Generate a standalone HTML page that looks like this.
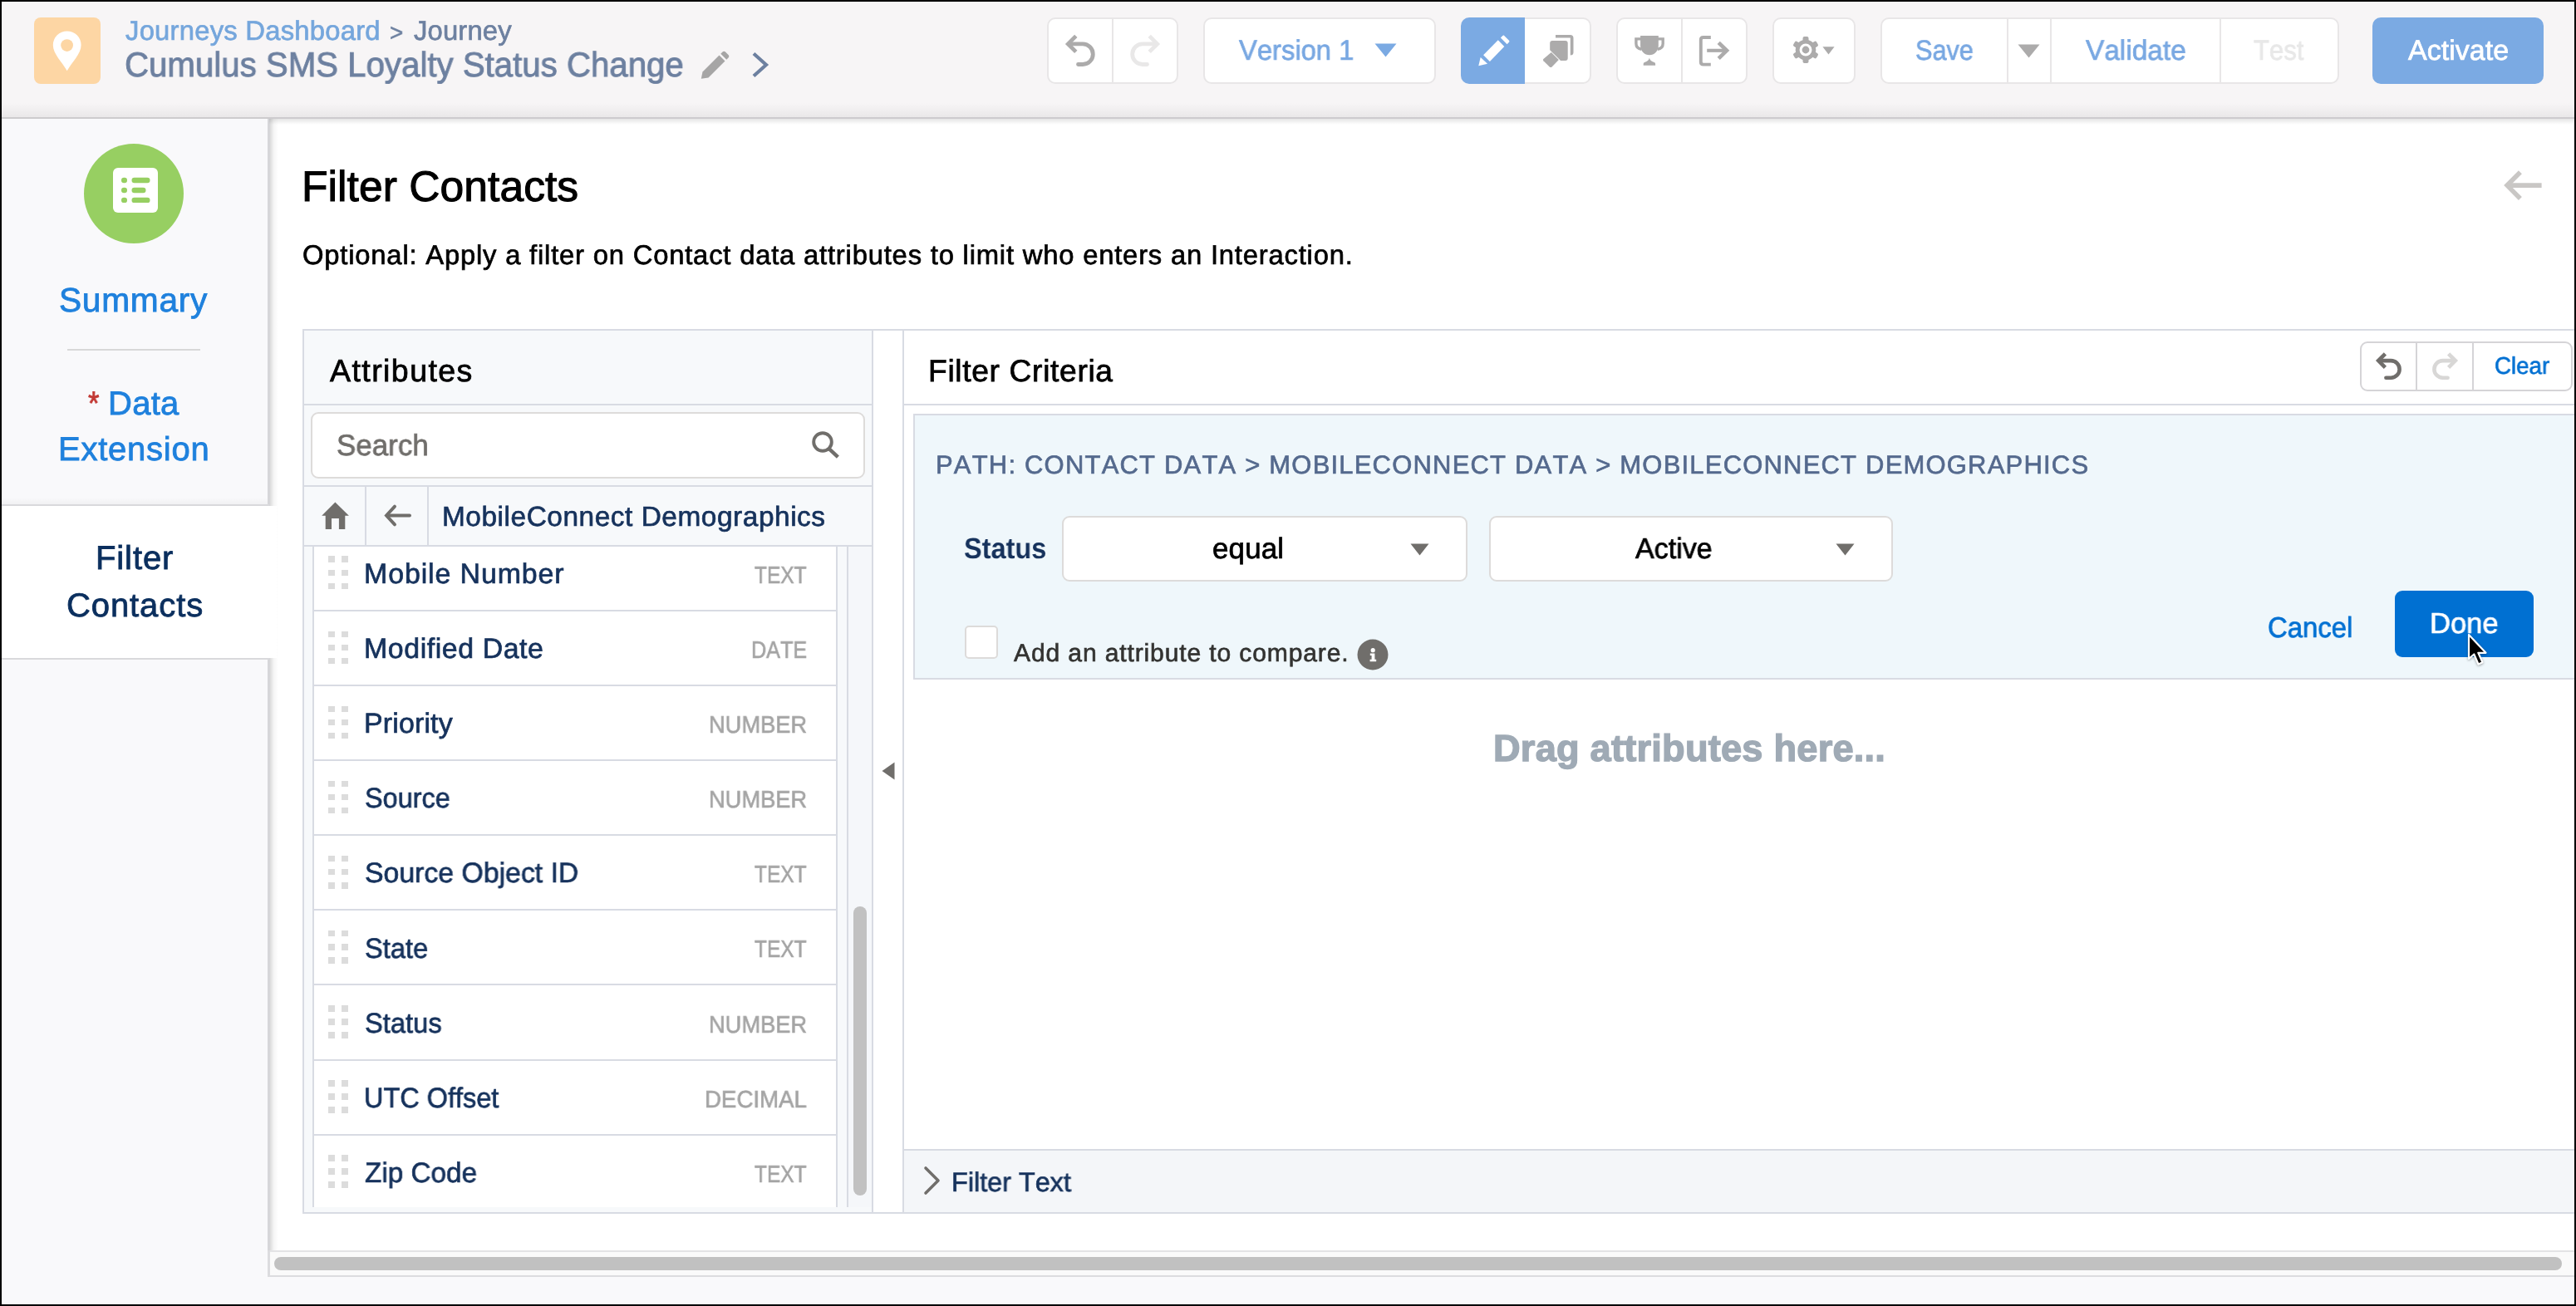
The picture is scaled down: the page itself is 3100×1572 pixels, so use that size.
<!DOCTYPE html>
<html><head><meta charset="utf-8"><title>Journey Builder - Filter Contacts</title>
<style>
html,body{margin:0;padding:0;}
body{width:3100px;height:1572px;overflow:hidden;background:#000;font-family:"Liberation Sans",sans-serif;position:relative;}
#app{position:absolute;left:0;top:0;width:3100px;height:1572px;overflow:hidden;}
.b{position:absolute;box-sizing:border-box;display:block;}
.t{position:absolute;white-space:nowrap;line-height:0;will-change:transform;font-kerning:none;text-rendering:geometricPrecision;}
.t i{display:inline-block;width:0;height:100px;}
</style></head><body><div id="app">
<div class="b" style="left:2px;top:2px;width:3096px;height:1568px;background:#fff;"></div>
<div class="b" style="left:2px;top:143px;width:320px;height:1427px;background:#f9f9fb;"></div>
<div class="b" style="left:322px;top:143px;width:2.5px;height:1363px;background:#d6d6d9;"></div>
<div class="b" style="left:324.5px;top:143px;width:10.5px;height:1363px;background:linear-gradient(to right,rgba(0,0,0,0.14),rgba(0,0,0,0.04) 45%,rgba(0,0,0,0));"></div>
<div class="b" style="left:322px;top:1536px;width:2776px;height:34px;background:#f9f9fb;"></div>
<div class="b" style="left:324px;top:1505px;width:2774px;height:32px;background:#fafafa;border-top:2px solid #e3e3e5;border-bottom:2px solid #dcdcdf;"></div>
<div class="b" style="left:322px;top:1505px;width:2.5px;height:32px;background:#dcdcdf;"></div>
<div class="b" style="left:330px;top:1513px;width:2753px;height:16px;background:#c1c1c1;border-radius:8px;"></div>
<div class="b" style="left:101px;top:173px;width:120px;height:120px;background:#97cf62;border-radius:50%;"></div>
<svg class="b" style="left:136px;top:201.5px;" width="54" height="54" viewBox="0 0 54 54"><rect x="0" y="0" width="54" height="54" rx="6" fill="#fff"/><g fill="#97cf62"><rect x="10" y="11.800" width="7" height="6.400" rx="3.200"/><rect x="22.500" y="11.800" width="22" height="6.400" rx="3.200"/><rect x="10" y="23.800" width="7" height="6.400" rx="3.200"/><rect x="22.500" y="23.800" width="17" height="6.400" rx="3.200"/><rect x="10" y="35.700" width="7" height="6.400" rx="3.200"/><rect x="22.500" y="35.700" width="22" height="6.400" rx="3.200"/></g></svg>
<div class="t" style="left:71.0px;top:274.8px;font-size:40.7px;color:#1f81dd;letter-spacing:0.71px;-webkit-text-stroke:0.85px #1f81dd;"><i></i>Summary</div>
<div class="b" style="left:81px;top:420px;width:160px;height:2px;background:#d8d8d8;"></div>
<div class="t" style="left:105.5px;top:399.0px;font-size:40px;color:#c23934;-webkit-text-stroke:0.84px #c23934;transform:scaleX(0.8654);transform-origin:left center;"><i></i>*</div>
<div class="t" style="left:130.3px;top:399.0px;font-size:40.0px;color:#1f81dd;letter-spacing:0.25px;-webkit-text-stroke:0.84px #1f81dd;"><i></i>Data</div>
<div class="t" style="left:70.0px;top:454.2px;font-size:40.0px;color:#1f81dd;letter-spacing:0.76px;-webkit-text-stroke:0.84px #1f81dd;"><i></i>Extension</div>
<div class="b" style="left:2px;top:609px;width:331px;height:183px;background:#fff;"></div>
<div class="b" style="left:324px;top:609px;width:12px;height:183px;background:linear-gradient(to right,#fff 60%,rgba(255,255,255,0));"></div>
<div class="b" style="left:2px;top:599px;width:320px;height:8px;background:linear-gradient(to bottom,rgba(0,0,0,0),rgba(0,0,0,0.035));"></div>
<div class="b" style="left:2px;top:607px;width:322px;height:2px;background:#d9d9dc;"></div>
<div class="b" style="left:2px;top:792px;width:322px;height:2px;background:#d9d9dc;"></div>
<div class="t" style="left:115.1px;top:585.0px;font-size:40.0px;color:#0b2f5e;letter-spacing:0.90px;-webkit-text-stroke:0.84px #0b2f5e;"><i></i>Filter</div>
<div class="t" style="left:80.4px;top:641.6px;font-size:40.0px;color:#0b2f5e;letter-spacing:0.90px;-webkit-text-stroke:0.84px #0b2f5e;"><i></i>Contacts</div>
<div class="b" style="left:2px;top:2px;width:3096px;height:139px;background:linear-gradient(to bottom,#f7f5f6 0,#f7f5f6 122px,#eae8e9 139px);"></div>
<div class="b" style="left:2px;top:141px;width:3096px;height:2px;background:#cdcbce;"></div>
<div class="b" style="left:324px;top:143px;width:2774px;height:7px;background:linear-gradient(to bottom,rgba(0,0,0,0.10),rgba(0,0,0,0));"></div>
<div class="b" style="left:41px;top:21px;width:80px;height:80px;background:#fdd6a4;border-radius:8px;"></div>
<svg class="b" style="left:63px;top:37px;" width="36" height="49" viewBox="0 0 36 49"><path d="M17.700 48.300C12 38 0.800 28 0.800 17.300A16.900 16.900 0 0 1 34.600 17.300C34.600 28 23.400 38 17.700 48.300z" fill="#fff"/><circle cx="17.600" cy="17.600" r="7.400" fill="#fdd6a4"/></svg>
<div class="t" style="left:151.2px;top:-52.5px;font-size:32.8px;color:#75a6dc;letter-spacing:0.23px;-webkit-text-stroke:0.69px #75a6dc;"><i></i>Journeys Dashboard</div>
<div class="t" style="left:468.9px;top:-50.7px;font-size:29px;color:#6d80a0;-webkit-text-stroke:0.61px #6d80a0;transform:scaleX(0.9525);transform-origin:left center;"><i></i>&gt;</div>
<div class="t" style="left:497.6px;top:-52.5px;font-size:32.8px;color:#6d80a0;letter-spacing:0.15px;-webkit-text-stroke:0.69px #6d80a0;"><i></i>Journey</div>
<div class="t" style="left:150.0px;top:-8.4px;font-size:41.7px;color:#6d80a0;-webkit-text-stroke:0.88px #6d80a0;transform:scaleX(0.9646);transform-origin:left center;"><i></i>Cumulus SMS Loyalty Status Change</div>
<svg class="b" style="left:843px;top:61px;" width="35" height="34" viewBox="0 0 35 34"><g fill="#a6a5a5"><path d="M22.500 5.500l7 7L9.500 32.500 0.800 33.700 2.500 25.500z"/><path d="M24.300 3.700l2.200-2.200c1-1 2.500-1 3.500 0l3.500 3.500c1 1 1 2.500 0 3.500l-2.200 2.200z"/></g></svg>
<svg class="b" style="left:903px;top:61px;" width="24" height="34" viewBox="0 0 24 34"><path d="M4 3.500L19 17 4 30.500" fill="none" stroke="#6d80a0" stroke-width="4.200" stroke-linecap="butt" stroke-linejoin="miter"/></svg>
<div class="b" style="left:1260px;top:21px;width:158px;height:80px;background:#fff;border:2px solid #e8e6e7;border-radius:10px;"></div>
<div class="b" style="left:1338px;top:23px;width:2px;height:76px;background:#e8e6e7;"></div>
<svg class="b" style="left:1280px;top:40px;" width="40" height="42" viewBox="0 0 40 42"><g fill="none" stroke="#acabab" stroke-width="4.8" stroke-linejoin="miter"><path d="M14.8 3.4L5.3 12.9L14.8 22.4" stroke-linecap="butt"/><path d="M6.3 12.9H23.0a12.3 12.3 0 0 1 0 24.6H17.5" stroke-linecap="round"/></g></svg>
<svg class="b" style="left:1357.7px;top:40px;transform:scaleX(-1);" width="40" height="42" viewBox="0 0 40 42"><g fill="none" stroke="#e9e8e8" stroke-width="4.8" stroke-linejoin="miter"><path d="M14.8 3.4L5.3 12.9L14.8 22.4" stroke-linecap="butt"/><path d="M6.3 12.9H23.0a12.3 12.3 0 0 1 0 24.6H17.5" stroke-linecap="round"/></g></svg>
<div class="b" style="left:1448px;top:21px;width:280px;height:80px;background:#fff;border:2px solid #e8e6e7;border-radius:10px;"></div>
<div class="t" style="left:1490.5px;top:-28.0px;font-size:34.0px;color:#79a8e2;-webkit-text-stroke:0.71px #79a8e2;transform:scaleX(0.9632);transform-origin:left center;"><i></i>Version 1</div>
<svg class="b" style="left:1654px;top:52px;" width="27" height="17" viewBox="0 0 27 17"><path d="M0.500 0.500h26L13.500 16.500z" fill="#7baae3"/></svg>
<div class="b" style="left:1758px;top:21px;width:77px;height:80px;background:#7baae3;border-radius:10px 0 0 10px;"></div>
<div class="b" style="left:1835px;top:21px;width:80px;height:80px;background:#fff;border:2px solid #e8e6e7;border-left:none;border-radius:0 10px 10px 0;"></div>
<svg class="b" style="left:1775px;top:38px;" width="46" height="46" viewBox="0 0 46 46"><g fill="#fff"><polygon points="27.8,10.3 35.3,18.0 17.9,35.9 10.1,28.3"/><polygon points="6.7,31.1 15.1,38.8 4.3,41.2"/><path d="M34.7 4.6l6.3 6.2q1 1 0 2l-2.400 2.400l-7.700-7.700l2.400-2.400q0.700-0.700 1.400-0.500z"/></g></svg>
<svg class="b" style="left:1855px;top:40px;" width="42" height="44" viewBox="0 0 42 44"><g fill="#acabab"><path d="M17 2h17.5q4 0 4 4v17q0 3.600-3.700 3.600v-21h-17.8z"/><path d="M13.2 8.9h15.5q3 0 3 3v18.2q0 3-3 3h-5.6L10.2 20.2v-8.3q0-3 3-3z"/><path d="M11.8 22.9L20.8 31.9L12.6 40.6q-1.400 1-2.800 0L2.4 33.2q-1-1.200 0-2.200z"/></g></svg>
<div class="b" style="left:1945px;top:21px;width:158px;height:80px;background:#fff;border:2px solid #e8e6e7;border-radius:10px;"></div>
<div class="b" style="left:2023px;top:23px;width:2px;height:76px;background:#e8e6e7;"></div>
<svg class="b" style="left:1965px;top:41px;" width="42" height="40" viewBox="0 0 42 40"><g fill="#acabab"><path d="M9.1 2h21.7v12a10.85 11.3 0 0 1 -21.7 0z"/><path d="M2.2 4.2h8v3.4h-4.6v4q0 4 4.600 5v3.500q-8-1-8-8.500z"/><path d="M37.9 4.2h-8v3.4h4.6v4q0 4-4.600 5v3.500q8-1 8-8.500z"/><path d="M19.9 28.8q1.300 4.200 5.200 4.900q2 0.300 2 2v2h-14.4v-2q0-1.700 2-2q3.900-0.700 5.200-4.900z"/></g></svg>
<svg class="b" style="left:2042px;top:41px;" width="42" height="40" viewBox="0 0 42 40"><g fill="none" stroke="#acabab" stroke-linejoin="miter"><path d="M16.8 4H7.8q-3 0-3 3V33.6q0 3 3 3H16.8" stroke-width="3.900" stroke-linejoin="round"/><path d="M12.2 19.8H35" stroke-width="4.100"/><path d="M26.2 10.3L36.0 19.8L26.2 29.3" stroke-width="4.600"/></g></svg>
<div class="b" style="left:2133px;top:21px;width:100px;height:80px;background:#fff;border:2px solid #e8e6e7;border-radius:10px;"></div>
<svg class="b" style="left:2152.5px;top:40.4px;" width="40" height="40" viewBox="0 0 40 40"><g fill="#acabab"><rect x="16.5" y="3.8999999999999986" width="7" height="10" rx="2" transform="rotate(0 20 20)"/><rect x="16.5" y="3.8999999999999986" width="7" height="10" rx="2" transform="rotate(60 20 20)"/><rect x="16.5" y="3.8999999999999986" width="7" height="10" rx="2" transform="rotate(120 20 20)"/><rect x="16.5" y="3.8999999999999986" width="7" height="10" rx="2" transform="rotate(180 20 20)"/><rect x="16.5" y="3.8999999999999986" width="7" height="10" rx="2" transform="rotate(240 20 20)"/><rect x="16.5" y="3.8999999999999986" width="7" height="10" rx="2" transform="rotate(300 20 20)"/><circle cx="20" cy="20" r="12.300"/></g><circle cx="20" cy="20" r="7.450" fill="#fff"/><circle cx="20" cy="20" r="4.400" fill="#acabab"/></svg>
<svg class="b" style="left:2192.5px;top:56.3px;" width="15" height="10" viewBox="0 0 15 10"><path d="M0.400 0.300h14.200L7.500 9.500z" fill="#acabab"/></svg>
<div class="b" style="left:2263px;top:21px;width:552px;height:80px;background:#fff;border:2px solid #e8e6e7;border-radius:10px;"></div>
<div class="b" style="left:2415px;top:23px;width:2px;height:76px;background:#e8e6e7;"></div>
<div class="b" style="left:2467px;top:23px;width:2px;height:76px;background:#e8e6e7;"></div>
<div class="b" style="left:2671px;top:23px;width:2px;height:76px;background:#e8e6e7;"></div>
<div class="t" style="left:2304.7px;top:-28.2px;font-size:34.0px;color:#79a8e2;-webkit-text-stroke:0.71px #79a8e2;transform:scaleX(0.9021);transform-origin:left center;"><i></i>Save</div>
<svg class="b" style="left:2428px;top:52.5px;" width="27" height="17" viewBox="0 0 27 17"><path d="M0.500 0.500h26L13.500 16.500z" fill="#acabab"/></svg>
<div class="t" style="left:2510.0px;top:-28.2px;font-size:34.0px;color:#79a8e2;-webkit-text-stroke:0.71px #79a8e2;transform:scaleX(0.9826);transform-origin:left center;"><i></i>Validate</div>
<div class="t" style="left:2712.1px;top:-28.2px;font-size:34.0px;color:#e8e8e8;-webkit-text-stroke:0.71px #e8e8e8;transform:scaleX(0.9130);transform-origin:left center;"><i></i>Test</div>
<div class="b" style="left:2855px;top:21px;width:206px;height:80px;background:#7baae3;border-radius:10px;"></div>
<div class="t" style="left:2898.1px;top:-28.2px;font-size:34.0px;color:#fff;letter-spacing:0.02px;-webkit-text-stroke:0.71px #fff;"><i></i>Activate</div>
<div class="t" style="left:363.1px;top:141.8px;font-size:51.6px;color:#000;letter-spacing:0.04px;-webkit-text-stroke:1.08px #000;"><i></i>Filter Contacts</div>
<div class="t" style="left:363.5px;top:217.6px;font-size:32.8px;color:#000;letter-spacing:0.79px;-webkit-text-stroke:0.69px #000;"><i></i>Optional: Apply a filter on Contact data attributes to limit who enters an Interaction.</div>
<svg class="b" style="left:3010px;top:202px;" width="52" height="42" viewBox="0 0 52 42"><g fill="none" stroke="#c9c7c5" stroke-width="5.600" stroke-linecap="butt" stroke-linejoin="miter"><path d="M9 21.100H48.600"/><path d="M22.900 5.200L7.100 21.100L22.900 37"/></g></svg>
<div class="b" style="left:364px;top:396px;width:2746px;height:1065px;background:#fff;border:2px solid #d8dbe3;"></div>
<div class="b" style="left:366px;top:398px;width:683px;height:1061px;background:#f7f9fb;"></div>
<div class="b" style="left:1049px;top:398px;width:2px;height:1061px;background:#d8dbe3;"></div>
<div class="t" style="left:396.6px;top:358.6px;font-size:37.5px;color:#000;letter-spacing:1.44px;-webkit-text-stroke:0.79px #000;"><i></i>Attributes</div>
<div class="b" style="left:366px;top:486px;width:683px;height:2px;background:#d8dbe3;"></div>
<div class="b" style="left:374px;top:496px;width:667px;height:80px;background:#fff;border:2px solid #dddbda;border-radius:9px;"></div>
<div class="t" style="left:405.4px;top:448.2px;font-size:35.6px;color:#706e6b;-webkit-text-stroke:0.75px #706e6b;transform:scaleX(0.9816);transform-origin:left center;"><i></i>Search</div>
<svg class="b" style="left:974px;top:516px;" width="40" height="40" viewBox="0 0 40 40"><circle cx="16" cy="16" r="10.800" fill="none" stroke="#706e6b" stroke-width="3.900"/><path d="M24.200 24.600L34.400 34.100" stroke="#706e6b" stroke-width="4.400" stroke-linecap="butt"/></svg>
<div class="b" style="left:366px;top:584px;width:683px;height:2px;background:#d8dbe3;"></div>
<div class="b" style="left:366px;top:656px;width:683px;height:2px;background:#d8dbe3;"></div>
<div class="b" style="left:439px;top:586px;width:2px;height:70px;background:#d8dbe3;"></div>
<div class="b" style="left:514px;top:586px;width:2px;height:70px;background:#d8dbe3;"></div>
<svg class="b" style="left:385px;top:602px;" width="38" height="38" viewBox="0 0 38 38"><path d="M18.4 2.4L34.9 18.8H30.3V34.9H22.9V22.1H14V34.9H6.7V18.8H2.2z" fill="#706e6b"/></svg>
<svg class="b" style="left:458px;top:604px;" width="40" height="34" viewBox="0 0 40 34"><g fill="none" stroke="#706e6b" stroke-width="3.900" stroke-linecap="round" stroke-linejoin="miter"><path d="M8 16.5H35"/><path d="M17 5.6L7 16.5L17 27.4"/></g></svg>
<div class="t" style="left:532.3px;top:532.7px;font-size:33.4px;color:#16325c;letter-spacing:0.55px;-webkit-text-stroke:0.70px #16325c;"><i></i>MobileConnect Demographics</div>
<div class="b" style="left:376px;top:658px;width:632px;height:795px;background:#fff;border-left:2px solid #d8dbe3;border-right:2px solid #d8dbe3;"></div>
<div class="b" style="left:1019px;top:658px;width:2px;height:795px;background:#d8dbe3;"></div>
<div class="b" style="left:1021px;top:658px;width:28px;height:795px;background:#f5f7fa;"></div>
<div class="b" style="left:378px;top:734px;width:628px;height:2px;background:#d8dbe3;"></div>
<div class="b" style="left:395.4px;top:669.4px;width:7.800000000000011px;height:7.5px;background:#dcdcdc;"></div>
<div class="b" style="left:411.4px;top:669.4px;width:7.800000000000011px;height:7.5px;background:#dcdcdc;"></div>
<div class="b" style="left:395.4px;top:685.5px;width:7.800000000000011px;height:7.5px;background:#dcdcdc;"></div>
<div class="b" style="left:411.4px;top:685.5px;width:7.800000000000011px;height:7.5px;background:#dcdcdc;"></div>
<div class="b" style="left:395.4px;top:701.6px;width:7.800000000000011px;height:7.5px;background:#dcdcdc;"></div>
<div class="b" style="left:411.4px;top:701.6px;width:7.800000000000011px;height:7.5px;background:#dcdcdc;"></div>
<div class="t" style="left:437.6px;top:602.0px;font-size:33.9px;color:#16325c;letter-spacing:0.90px;-webkit-text-stroke:0.71px #16325c;"><i></i>Mobile Number</div>
<div class="t" style="left:908.4px;top:601.9px;font-size:28.9px;color:#a4a4a4;-webkit-text-stroke:0.61px #a4a4a4;transform:scaleX(0.8462);transform-origin:left center;"><i></i>TEXT</div>
<div class="b" style="left:378px;top:824px;width:628px;height:2px;background:#d8dbe3;"></div>
<div class="b" style="left:395.4px;top:759.5px;width:7.800000000000011px;height:7.5px;background:#dcdcdc;"></div>
<div class="b" style="left:411.4px;top:759.5px;width:7.800000000000011px;height:7.5px;background:#dcdcdc;"></div>
<div class="b" style="left:395.4px;top:775.6px;width:7.800000000000011px;height:7.5px;background:#dcdcdc;"></div>
<div class="b" style="left:411.4px;top:775.6px;width:7.800000000000011px;height:7.5px;background:#dcdcdc;"></div>
<div class="b" style="left:395.4px;top:791.7px;width:7.800000000000011px;height:7.5px;background:#dcdcdc;"></div>
<div class="b" style="left:411.4px;top:791.7px;width:7.800000000000011px;height:7.5px;background:#dcdcdc;"></div>
<div class="t" style="left:437.6px;top:692.1px;font-size:33.9px;color:#16325c;letter-spacing:0.57px;-webkit-text-stroke:0.71px #16325c;"><i></i>Modified Date</div>
<div class="t" style="left:904.2px;top:692.0px;font-size:28.9px;color:#a4a4a4;-webkit-text-stroke:0.61px #a4a4a4;transform:scaleX(0.8721);transform-origin:left center;"><i></i>DATE</div>
<div class="b" style="left:378px;top:914px;width:628px;height:2px;background:#d8dbe3;"></div>
<div class="b" style="left:395.4px;top:849.6px;width:7.800000000000011px;height:7.5px;background:#dcdcdc;"></div>
<div class="b" style="left:411.4px;top:849.6px;width:7.800000000000011px;height:7.5px;background:#dcdcdc;"></div>
<div class="b" style="left:395.4px;top:865.7px;width:7.800000000000011px;height:7.5px;background:#dcdcdc;"></div>
<div class="b" style="left:411.4px;top:865.7px;width:7.800000000000011px;height:7.5px;background:#dcdcdc;"></div>
<div class="b" style="left:395.4px;top:881.8px;width:7.800000000000011px;height:7.5px;background:#dcdcdc;"></div>
<div class="b" style="left:411.4px;top:881.8px;width:7.800000000000011px;height:7.5px;background:#dcdcdc;"></div>
<div class="t" style="left:437.6px;top:782.2px;font-size:33.9px;color:#16325c;letter-spacing:0.17px;-webkit-text-stroke:0.71px #16325c;"><i></i>Priority</div>
<div class="t" style="left:853.3px;top:782.1px;font-size:28.9px;color:#a4a4a4;-webkit-text-stroke:0.61px #a4a4a4;transform:scaleX(0.9440);transform-origin:left center;"><i></i>NUMBER</div>
<div class="b" style="left:378px;top:1004px;width:628px;height:2px;background:#d8dbe3;"></div>
<div class="b" style="left:395.4px;top:939.7px;width:7.800000000000011px;height:7.5px;background:#dcdcdc;"></div>
<div class="b" style="left:411.4px;top:939.7px;width:7.800000000000011px;height:7.5px;background:#dcdcdc;"></div>
<div class="b" style="left:395.4px;top:955.8px;width:7.800000000000011px;height:7.5px;background:#dcdcdc;"></div>
<div class="b" style="left:411.4px;top:955.8px;width:7.800000000000011px;height:7.5px;background:#dcdcdc;"></div>
<div class="b" style="left:395.4px;top:971.9px;width:7.800000000000011px;height:7.5px;background:#dcdcdc;"></div>
<div class="b" style="left:411.4px;top:971.9px;width:7.800000000000011px;height:7.5px;background:#dcdcdc;"></div>
<div class="t" style="left:438.9px;top:872.3px;font-size:33.9px;color:#16325c;-webkit-text-stroke:0.71px #16325c;transform:scaleX(0.9574);transform-origin:left center;"><i></i>Source</div>
<div class="t" style="left:853.3px;top:872.2px;font-size:28.9px;color:#a4a4a4;-webkit-text-stroke:0.61px #a4a4a4;transform:scaleX(0.9440);transform-origin:left center;"><i></i>NUMBER</div>
<div class="b" style="left:378px;top:1094px;width:628px;height:2px;background:#d8dbe3;"></div>
<div class="b" style="left:395.4px;top:1029.8px;width:7.800000000000011px;height:7.5px;background:#dcdcdc;"></div>
<div class="b" style="left:411.4px;top:1029.8px;width:7.800000000000011px;height:7.5px;background:#dcdcdc;"></div>
<div class="b" style="left:395.4px;top:1045.9px;width:7.800000000000011px;height:7.5px;background:#dcdcdc;"></div>
<div class="b" style="left:411.4px;top:1045.9px;width:7.800000000000011px;height:7.5px;background:#dcdcdc;"></div>
<div class="b" style="left:395.4px;top:1062.0px;width:7.800000000000011px;height:7.5px;background:#dcdcdc;"></div>
<div class="b" style="left:411.4px;top:1062.0px;width:7.800000000000011px;height:7.5px;background:#dcdcdc;"></div>
<div class="t" style="left:438.8px;top:962.4px;font-size:33.9px;color:#16325c;-webkit-text-stroke:0.71px #16325c;transform:scaleX(0.9970);transform-origin:left center;"><i></i>Source Object ID</div>
<div class="t" style="left:908.4px;top:962.3px;font-size:28.9px;color:#a4a4a4;-webkit-text-stroke:0.61px #a4a4a4;transform:scaleX(0.8462);transform-origin:left center;"><i></i>TEXT</div>
<div class="b" style="left:378px;top:1184px;width:628px;height:2px;background:#d8dbe3;"></div>
<div class="b" style="left:395.4px;top:1119.9px;width:7.800000000000011px;height:7.5px;background:#dcdcdc;"></div>
<div class="b" style="left:411.4px;top:1119.9px;width:7.800000000000011px;height:7.5px;background:#dcdcdc;"></div>
<div class="b" style="left:395.4px;top:1136.0px;width:7.800000000000011px;height:7.5px;background:#dcdcdc;"></div>
<div class="b" style="left:411.4px;top:1136.0px;width:7.800000000000011px;height:7.5px;background:#dcdcdc;"></div>
<div class="b" style="left:395.4px;top:1152.1px;width:7.800000000000011px;height:7.5px;background:#dcdcdc;"></div>
<div class="b" style="left:411.4px;top:1152.1px;width:7.800000000000011px;height:7.5px;background:#dcdcdc;"></div>
<div class="t" style="left:438.9px;top:1052.5px;font-size:33.9px;color:#16325c;-webkit-text-stroke:0.71px #16325c;transform:scaleX(0.9633);transform-origin:left center;"><i></i>State</div>
<div class="t" style="left:908.4px;top:1052.4px;font-size:28.9px;color:#a4a4a4;-webkit-text-stroke:0.61px #a4a4a4;transform:scaleX(0.8462);transform-origin:left center;"><i></i>TEXT</div>
<div class="b" style="left:378px;top:1275px;width:628px;height:2px;background:#d8dbe3;"></div>
<div class="b" style="left:395.4px;top:1210.0px;width:7.800000000000011px;height:7.5px;background:#dcdcdc;"></div>
<div class="b" style="left:411.4px;top:1210.0px;width:7.800000000000011px;height:7.5px;background:#dcdcdc;"></div>
<div class="b" style="left:395.4px;top:1226.1px;width:7.800000000000011px;height:7.5px;background:#dcdcdc;"></div>
<div class="b" style="left:411.4px;top:1226.1px;width:7.800000000000011px;height:7.5px;background:#dcdcdc;"></div>
<div class="b" style="left:395.4px;top:1242.2px;width:7.800000000000011px;height:7.5px;background:#dcdcdc;"></div>
<div class="b" style="left:411.4px;top:1242.2px;width:7.800000000000011px;height:7.5px;background:#dcdcdc;"></div>
<div class="t" style="left:438.9px;top:1142.6px;font-size:33.9px;color:#16325c;-webkit-text-stroke:0.71px #16325c;transform:scaleX(0.9644);transform-origin:left center;"><i></i>Status</div>
<div class="t" style="left:853.3px;top:1142.5px;font-size:28.9px;color:#a4a4a4;-webkit-text-stroke:0.61px #a4a4a4;transform:scaleX(0.9440);transform-origin:left center;"><i></i>NUMBER</div>
<div class="b" style="left:378px;top:1365px;width:628px;height:2px;background:#d8dbe3;"></div>
<div class="b" style="left:395.4px;top:1300.1px;width:7.800000000000011px;height:7.5px;background:#dcdcdc;"></div>
<div class="b" style="left:411.4px;top:1300.1px;width:7.800000000000011px;height:7.5px;background:#dcdcdc;"></div>
<div class="b" style="left:395.4px;top:1316.2px;width:7.800000000000011px;height:7.5px;background:#dcdcdc;"></div>
<div class="b" style="left:411.4px;top:1316.2px;width:7.800000000000011px;height:7.5px;background:#dcdcdc;"></div>
<div class="b" style="left:395.4px;top:1332.3px;width:7.800000000000011px;height:7.5px;background:#dcdcdc;"></div>
<div class="b" style="left:411.4px;top:1332.3px;width:7.800000000000011px;height:7.5px;background:#dcdcdc;"></div>
<div class="t" style="left:437.8px;top:1232.7px;font-size:33.9px;color:#16325c;-webkit-text-stroke:0.71px #16325c;transform:scaleX(0.9578);transform-origin:left center;"><i></i>UTC Offset</div>
<div class="t" style="left:848.2px;top:1232.6px;font-size:28.9px;color:#a4a4a4;-webkit-text-stroke:0.61px #a4a4a4;transform:scaleX(0.9575);transform-origin:left center;"><i></i>DECIMAL</div>
<div class="b" style="left:395.4px;top:1390.2px;width:7.800000000000011px;height:7.5px;background:#dcdcdc;"></div>
<div class="b" style="left:411.4px;top:1390.2px;width:7.800000000000011px;height:7.5px;background:#dcdcdc;"></div>
<div class="b" style="left:395.4px;top:1406.3px;width:7.800000000000011px;height:7.5px;background:#dcdcdc;"></div>
<div class="b" style="left:411.4px;top:1406.3px;width:7.800000000000011px;height:7.5px;background:#dcdcdc;"></div>
<div class="b" style="left:395.4px;top:1422.4px;width:7.800000000000011px;height:7.5px;background:#dcdcdc;"></div>
<div class="b" style="left:411.4px;top:1422.4px;width:7.800000000000011px;height:7.5px;background:#dcdcdc;"></div>
<div class="t" style="left:439.3px;top:1322.8px;font-size:33.9px;color:#16325c;-webkit-text-stroke:0.71px #16325c;transform:scaleX(0.9817);transform-origin:left center;"><i></i>Zip Code</div>
<div class="t" style="left:908.4px;top:1322.7px;font-size:28.9px;color:#a4a4a4;-webkit-text-stroke:0.61px #a4a4a4;transform:scaleX(0.8462);transform-origin:left center;"><i></i>TEXT</div>
<div class="b" style="left:1027px;top:1090.5px;width:16px;height:348.20000000000005px;background:#c1c1c1;border-radius:8px;"></div>
<svg class="b" style="left:1061px;top:917px;" width="16" height="22" viewBox="0 0 16 22"><path d="M15.500 0.500v21L0.500 11z" fill="#706e6b"/></svg>
<div class="b" style="left:1086px;top:398px;width:2px;height:1061px;background:#d8dbe3;"></div>
<div class="t" style="left:1116.9px;top:359.0px;font-size:37.2px;color:#000;letter-spacing:0.66px;-webkit-text-stroke:0.78px #000;"><i></i>Filter Criteria</div>
<div class="b" style="left:1088px;top:486px;width:2010px;height:2px;background:#d8dbe3;"></div>
<div class="b" style="left:2840px;top:411px;width:256px;height:60px;background:#fff;border:2px solid #d5d4d7;border-radius:9px;"></div>
<div class="b" style="left:2907px;top:413px;width:2px;height:56px;background:#d5d4d7;"></div>
<div class="b" style="left:2975px;top:413px;width:2px;height:56px;background:#d5d4d7;"></div>
<svg class="b" style="left:2856px;top:420px;" width="40" height="42" viewBox="0 0 40 42"><g fill="none" stroke="#706e6b" stroke-width="4.6" stroke-linejoin="miter"><path d="M14.4 5.9L6.2 14.1L14.4 22.3" stroke-linecap="butt"/><path d="M7.2 14.1H21.3a10.3 10.3 0 0 1 0 20.6H15.4" stroke-linecap="round"/></g></svg>
<svg class="b" style="left:2920.9px;top:420px;transform:scaleX(-1);" width="40" height="42" viewBox="0 0 40 42"><g fill="none" stroke="#d8d7d6" stroke-width="4.6" stroke-linejoin="miter"><path d="M14.4 5.9L6.2 14.1L14.4 22.3" stroke-linecap="butt"/><path d="M7.2 14.1H21.3a10.3 10.3 0 0 1 0 20.6H15.4" stroke-linecap="round"/></g></svg>
<div class="t" style="left:3002.4px;top:349.8px;font-size:28.9px;color:#0070d2;-webkit-text-stroke:0.61px #0070d2;transform:scaleX(0.9584);transform-origin:left center;"><i></i>Clear</div>
<div class="b" style="left:1099px;top:498px;width:2011px;height:320px;background:#eff7fb;border:2px solid #d8dbe3;"></div>
<div class="t" style="left:1125.8px;top:470.0px;font-size:31px;color:#54698d;letter-spacing:1.19px;-webkit-text-stroke:0.65px #54698d;"><i></i>PATH: CONTACT DATA &gt; MOBILECONNECT DATA &gt; MOBILECONNECT DEMOGRAPHICS</div>
<div class="t" style="left:1160.1px;top:571.6px;font-size:35.2px;color:#16325c;font-weight:bold;transform:scaleX(0.9228);transform-origin:left center;"><i></i>Status</div>
<div class="b" style="left:1278px;top:621px;width:488px;height:79px;background:#fff;border:2px solid #dddbda;border-radius:9px;"></div>
<div class="t" style="left:1458.9px;top:571.6px;font-size:34.9px;color:#000;letter-spacing:0.17px;-webkit-text-stroke:0.73px #000;"><i></i>equal</div>
<svg class="b" style="left:1697px;top:654px;" width="23" height="15" viewBox="0 0 23 15"><path d="M0.500 0.500h22L11.500 14.500z" fill="#706e6b"/></svg>
<div class="b" style="left:1792px;top:621px;width:486px;height:79px;background:#fff;border:2px solid #dddbda;border-radius:9px;"></div>
<div class="t" style="left:1968.3px;top:571.6px;font-size:34.9px;color:#000;-webkit-text-stroke:0.73px #000;transform:scaleX(0.9750);transform-origin:left center;"><i></i>Active</div>
<svg class="b" style="left:2209px;top:654px;" width="23" height="15" viewBox="0 0 23 15"><path d="M0.500 0.500h22L11.500 14.500z" fill="#706e6b"/></svg>
<div class="b" style="left:1161px;top:753px;width:39.5px;height:39.5px;background:#fff;border:2px solid #dddbda;border-radius:5px;"></div>
<div class="t" style="left:1219.6px;top:696.0px;font-size:30.1px;color:#333331;letter-spacing:0.85px;-webkit-text-stroke:0.63px #333331;"><i></i>Add an attribute to compare.</div>
<svg class="b" style="left:1633px;top:768.6px;" width="38" height="38" viewBox="0 0 38 38"><circle cx="19" cy="19" r="18.500" fill="#706e6b"/><g fill="#fff"><circle cx="19.200" cy="13.700" r="2.600"/><path d="M15.800 17.500h5.600v7.200h1.800v2.600h-7.600v-2.600h2v-4.600h-1.800z"/></g></svg>
<div class="t" style="left:2729.3px;top:666.5px;font-size:34.6px;color:#0070d2;-webkit-text-stroke:0.73px #0070d2;transform:scaleX(0.9496);transform-origin:left center;"><i></i>Cancel</div>
<div class="b" style="left:2882px;top:711px;width:167px;height:80px;background:#0070d2;border-radius:9px;"></div>
<div class="t" style="left:2923.5px;top:662.1px;font-size:34.9px;color:#fff;-webkit-text-stroke:0.73px #fff;transform:scaleX(0.9906);transform-origin:left center;"><i></i>Done</div>
<svg class="b" style="left:2967px;top:760.4px;" width="34" height="48" viewBox="-4 -4 34 48"><path d="M0 0V29L6.300 23.500L11.500 35.500L16.500 33.300L11.300 21.800H20.500z" fill="#000" stroke="#fff" stroke-width="2.200" stroke-linejoin="round" style="filter:drop-shadow(0 1px 1.500px rgba(0,0,0,0.35))"/></svg>
<div class="t" style="left:1796.5px;top:816.4px;font-size:45.2px;color:#9faab5;letter-spacing:0.22px;font-weight:bold;-webkit-text-stroke:1.36px #9faab5;"><i></i>Drag attributes here...</div>
<div class="b" style="left:1088px;top:1383px;width:2010px;height:76px;background:#f4f6f9;border-top:2px solid #d8dbe3;"></div>
<svg class="b" style="left:1110px;top:1403px;" width="24" height="36" viewBox="0 0 24 36"><path d="M4 3L19 18 4 33" fill="none" stroke="#706e6b" stroke-width="3.600" stroke-linecap="round" stroke-linejoin="round"/></svg>
<div class="t" style="left:1144.7px;top:1334.0px;font-size:32.7px;color:#16325c;-webkit-text-stroke:0.69px #16325c;transform:scaleX(0.9901);transform-origin:left center;"><i></i>Filter Text</div>
<div class="b" style="left:0px;top:0px;width:3100px;height:2px;background:#000;"></div>
<div class="b" style="left:0px;top:1570px;width:3100px;height:2px;background:#000;"></div>
<div class="b" style="left:0px;top:0px;width:2px;height:1572px;background:#000;"></div>
<div class="b" style="left:3098px;top:0px;width:2px;height:1572px;background:#000;"></div>
</div></body></html>
